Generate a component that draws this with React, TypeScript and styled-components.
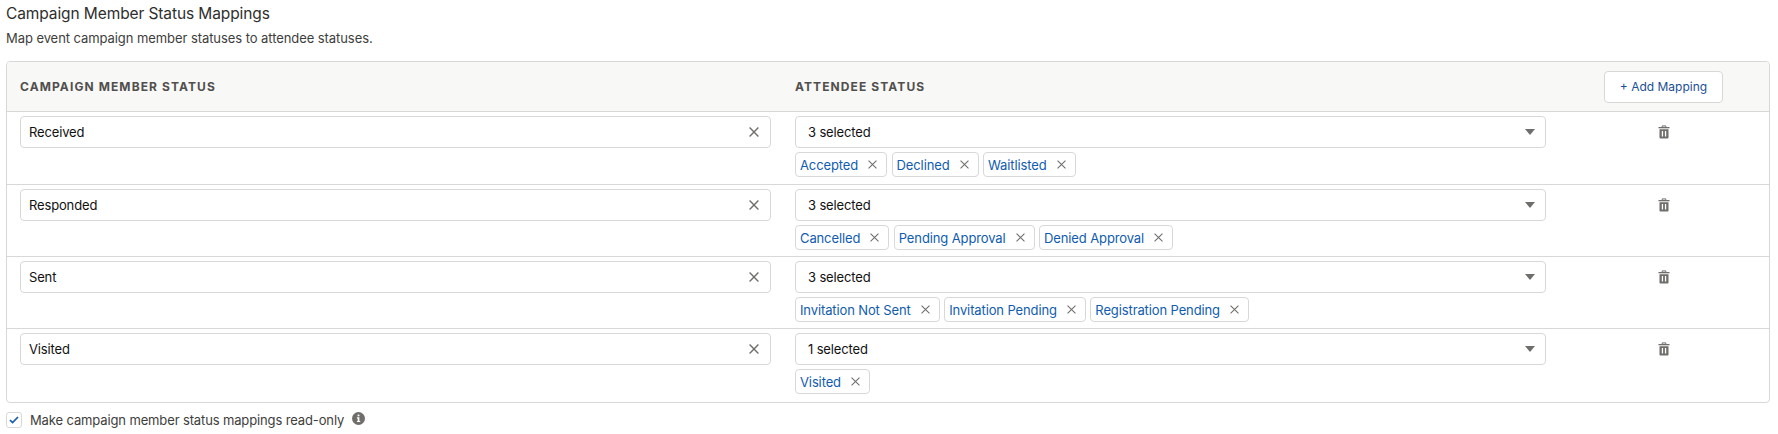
import React from "react";
import styled, { createGlobalStyle } from "styled-components";

const Global = createGlobalStyle`
  html, body { margin: 0; padding: 0; background: #fff; }
  body { font-family: Inter, "Liberation Sans", sans-serif; color: #181818; overflow: hidden; }
`;

const Page = styled.div`
  width: 1778px;
  height: 434px;
  box-sizing: border-box;
  padding: 3px 8px 0 6px;
`;
const Title = styled.h2`
  margin: 0;
  font-size: 15.5px;
  font-weight: 400;
  line-height: 22px;
  letter-spacing: -0.1px;
  color: #2e2e2e;
`;
const Description = styled.p`
  margin: 4px 0 0;
  font-size: 13px;
  line-height: 19px;
  letter-spacing: -0.07px;
  color: #3e3e3c;
`;
const Table = styled.div`
  margin-top: 13px;
  border: 1px solid #d8d8d6;
  border-radius: 4px;
  overflow: hidden;
`;
const Grid = styled.div`
  display: grid;
  grid-template-columns: 751px 751px 1fr;
  column-gap: 24px;
  padding: 0 12px 0 13px;
`;
const HeaderRow = styled(Grid)`
  height: 49px;
  align-items: center;
  background: #f8f8f7;
  border-bottom: 1px solid #d8d8d6;
`;
const HeaderLabel = styled.div`
  font-size: 12px;
  font-weight: 700;
  letter-spacing: 1.1px;
  color: #514f4d;
  text-transform: uppercase;
`;
const ActionCell = styled.div`
  display: flex;
  justify-content: center;
`;
const AddButton = styled.button`
  width: 119px;
  height: 32px;
  border: 1px solid #d8d8d6;
  border-radius: 4px;
  background: #fff;
  font: 400 12px Inter, "Liberation Sans", sans-serif;
  color: #1b4f94;
  padding: 0;
`;
const Row = styled(Grid)<{ $height: number; $last: boolean }>`
  height: ${(p) => p.$height}px;
  box-sizing: border-box;
  padding-top: 4px;
  border-bottom: ${(p) => (p.$last ? "none" : "1px solid #d8d8d6")};
`;
const Field = styled.div`
  height: 32px;
  box-sizing: border-box;
  border: 1px solid #d8d8d6;
  border-radius: 4px;
  display: flex;
  align-items: center;
  justify-content: space-between;
  font-size: 13px;
  letter-spacing: -0.15px;
  color: #111;
  background: #fff;
`;
const TextField = styled(Field)`
  padding: 0 11px 0 8px;
`;
const SelectField = styled(Field)`
  padding: 0 10px 0 12px;
`;
const Tags = styled.div`
  display: flex;
  gap: 4.5px;
  margin-top: 4px;
`;
const Tag = styled.div`
  height: 25px;
  box-sizing: border-box;
  border: 1px solid #d8d8d6;
  border-radius: 4px;
  padding: 0 9px 0 4px;
  display: flex;
  align-items: center;
  gap: 10px;
  font-size: 13px;
  letter-spacing: -0.12px;
  color: #0f5cb0;
`;
const TrashCell = styled.div`
  display: flex;
  justify-content: center;
  padding-top: 9px;
`;
const Footer = styled.div`
  display: flex;
  align-items: center;
  margin-top: 9px;
  height: 16px;
`;
const Checkbox = styled.div`
  width: 16px;
  height: 16px;
  box-sizing: border-box;
  border: 1px solid #d8d8d6;
  border-radius: 3px;
  display: flex;
  align-items: center;
  justify-content: center;
`;
const CheckLabel = styled.span`
  margin-left: 8px;
  font-size: 13px;
  letter-spacing: -0.13px;
  color: #3e3e3c;
`;
const InfoWrap = styled.span`
  display: flex;
  align-self: flex-start;
  margin-left: 8px;
`;

const Close = ({ size = 9, w = 1.2 }: { size?: number; w?: number }) => (
  <svg width={size} height={size} viewBox="0 0 10 10" fill="none">
    <path d="M0.6 0.6 9.4 9.4M9.4 0.6 0.6 9.4" stroke="#706e6b" strokeWidth={w} />
  </svg>
);
const Caret = () => (
  <svg width="10" height="6" viewBox="0 0 10 6">
    <path d="M0 0H10L5 6Z" fill="#706e6b" />
  </svg>
);
const Trash = () => (
  <svg width="12" height="14" viewBox="0 0 12 14">
    <path d="M4.2 2V0.9h3.6V2" fill="none" stroke="#706e6b" strokeWidth="1" />
    <rect x="0.5" y="2" width="11" height="1.3" fill="#706e6b" />
    <path fillRule="evenodd" d="M1.5 4.3h9v8.4c0 .5-.4.8-.8.8H2.3c-.4 0-.8-.3-.8-.8V4.3ZM3.8 6v5.6h1.3V6H3.8Zm3.1 0v5.6h1.3V6H6.9Z" fill="#706e6b" />
  </svg>
);
const Check = () => (
  <svg width="10" height="8" viewBox="0 0 10 8" fill="none">
    <path d="M1 4.2 3.6 6.6 9 1" stroke="#1b5fae" strokeWidth="1.8" />
  </svg>
);
const Info = () => (
  <svg width="13" height="13" viewBox="0 0 13 13">
    <circle cx="6.5" cy="6.5" r="6.5" fill="#706e6b" />
    <rect x="5.6" y="2.6" width="1.8" height="1.7" fill="#fff" />
    <path d="M4.9 5.3h2.5v3.6h.8v1.1H4.9V8.9h.8V6.4h-.8Z" fill="#fff" />
  </svg>
);

const rows = [
  { name: "Received", count: 3, height: 73, tags: ["Accepted", "Declined", "Waitlisted"] },
  { name: "Responded", count: 3, height: 72, tags: ["Cancelled", "Pending Approval", "Denied Approval"] },
  { name: "Sent", count: 3, height: 72, tags: ["Invitation Not Sent", "Invitation Pending", "Registration Pending"] },
  { name: "Visited", count: 1, height: 73, tags: ["Visited"] },
];

export default function App() {
  return (
    <Page>
      <Global />
      <Title>Campaign Member Status Mappings</Title>
      <Description>Map event campaign member statuses to attendee statuses.</Description>
      <Table>
        <HeaderRow>
          <HeaderLabel>Campaign Member Status</HeaderLabel>
          <HeaderLabel>Attendee Status</HeaderLabel>
          <ActionCell>
            <AddButton>+ Add Mapping</AddButton>
          </ActionCell>
        </HeaderRow>
        {rows.map((r, i) => (
          <Row key={r.name} $height={r.height} $last={i === rows.length - 1}>
            <TextField>
              {r.name}
              <Close size={10} w={1.4} />
            </TextField>
            <div>
              <SelectField>
                {r.count} selected
                <Caret />
              </SelectField>
              <Tags>
                {r.tags.map((t) => (
                  <Tag key={t}>
                    {t}
                    <Close />
                  </Tag>
                ))}
              </Tags>
            </div>
            <TrashCell>
              <Trash />
            </TrashCell>
          </Row>
        ))}
      </Table>
      <Footer>
        <Checkbox>
          <Check />
        </Checkbox>
        <CheckLabel>Make campaign member status mappings read-only</CheckLabel>
        <InfoWrap>
          <Info />
        </InfoWrap>
      </Footer>
    </Page>
  );
}
